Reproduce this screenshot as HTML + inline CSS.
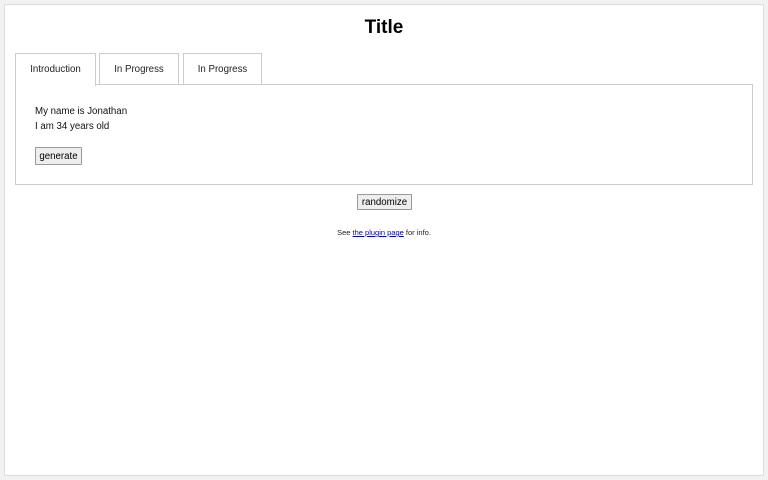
<!DOCTYPE html>
<html><head><style>
*{box-sizing:border-box;margin:0;padding:0}
body{width:768px;height:480px;background:#f2f2f2;font-family:"Liberation Sans",sans-serif;position:relative;overflow:hidden}
.page{position:absolute;left:4px;top:4px;width:760px;height:472px;background:#fff;border:1px solid #ddd}
.abs{position:absolute}
h1{position:absolute;left:0;width:768px;top:17px;text-align:center;font-size:19px;font-weight:bold;color:#000}
.tab{position:absolute;top:53px;height:32px;border:1px solid #ccc;border-bottom:none;font-size:9.7px;color:#222;text-align:center;line-height:31px;background:#fff}
.panel{position:absolute;left:15px;top:84px;width:738px;height:101px;border:1px solid #ccc}
.txt{font-size:9.7px;color:#111;line-height:15px}
.btn{position:absolute;background:#eee;border:1px solid #999;font-size:9.7px;text-align:center;color:#000;border-radius:1px}
</style></head><body>
<div class="page"></div>
<h1>Title</h1>
<div class="panel"></div>
<div class="tab" style="left:15px;width:81px;height:33px;z-index:2">Introduction</div>
<div class="tab" style="left:99px;width:80px;border-bottom:1px solid #ccc;height:32px">In Progress</div>
<div class="tab" style="left:183px;width:79px;border-bottom:1px solid #ccc;height:32px">In Progress</div>
<div class="abs txt" style="left:35px;top:104px">My name is Jonathan<br>I am 34 years old</div>
<div class="btn" style="left:35px;top:147px;width:47px;height:18px;line-height:17px">generate</div>
<div class="btn" style="left:357px;top:194px;width:55px;height:16px;line-height:15px">randomize</div>
<div class="abs" style="left:0;width:768px;top:228px;text-align:center;font-size:7.5px;color:#222">See <span style="color:#00c;text-decoration:underline">the plugin page</span> for info.</div>
</body></html>
